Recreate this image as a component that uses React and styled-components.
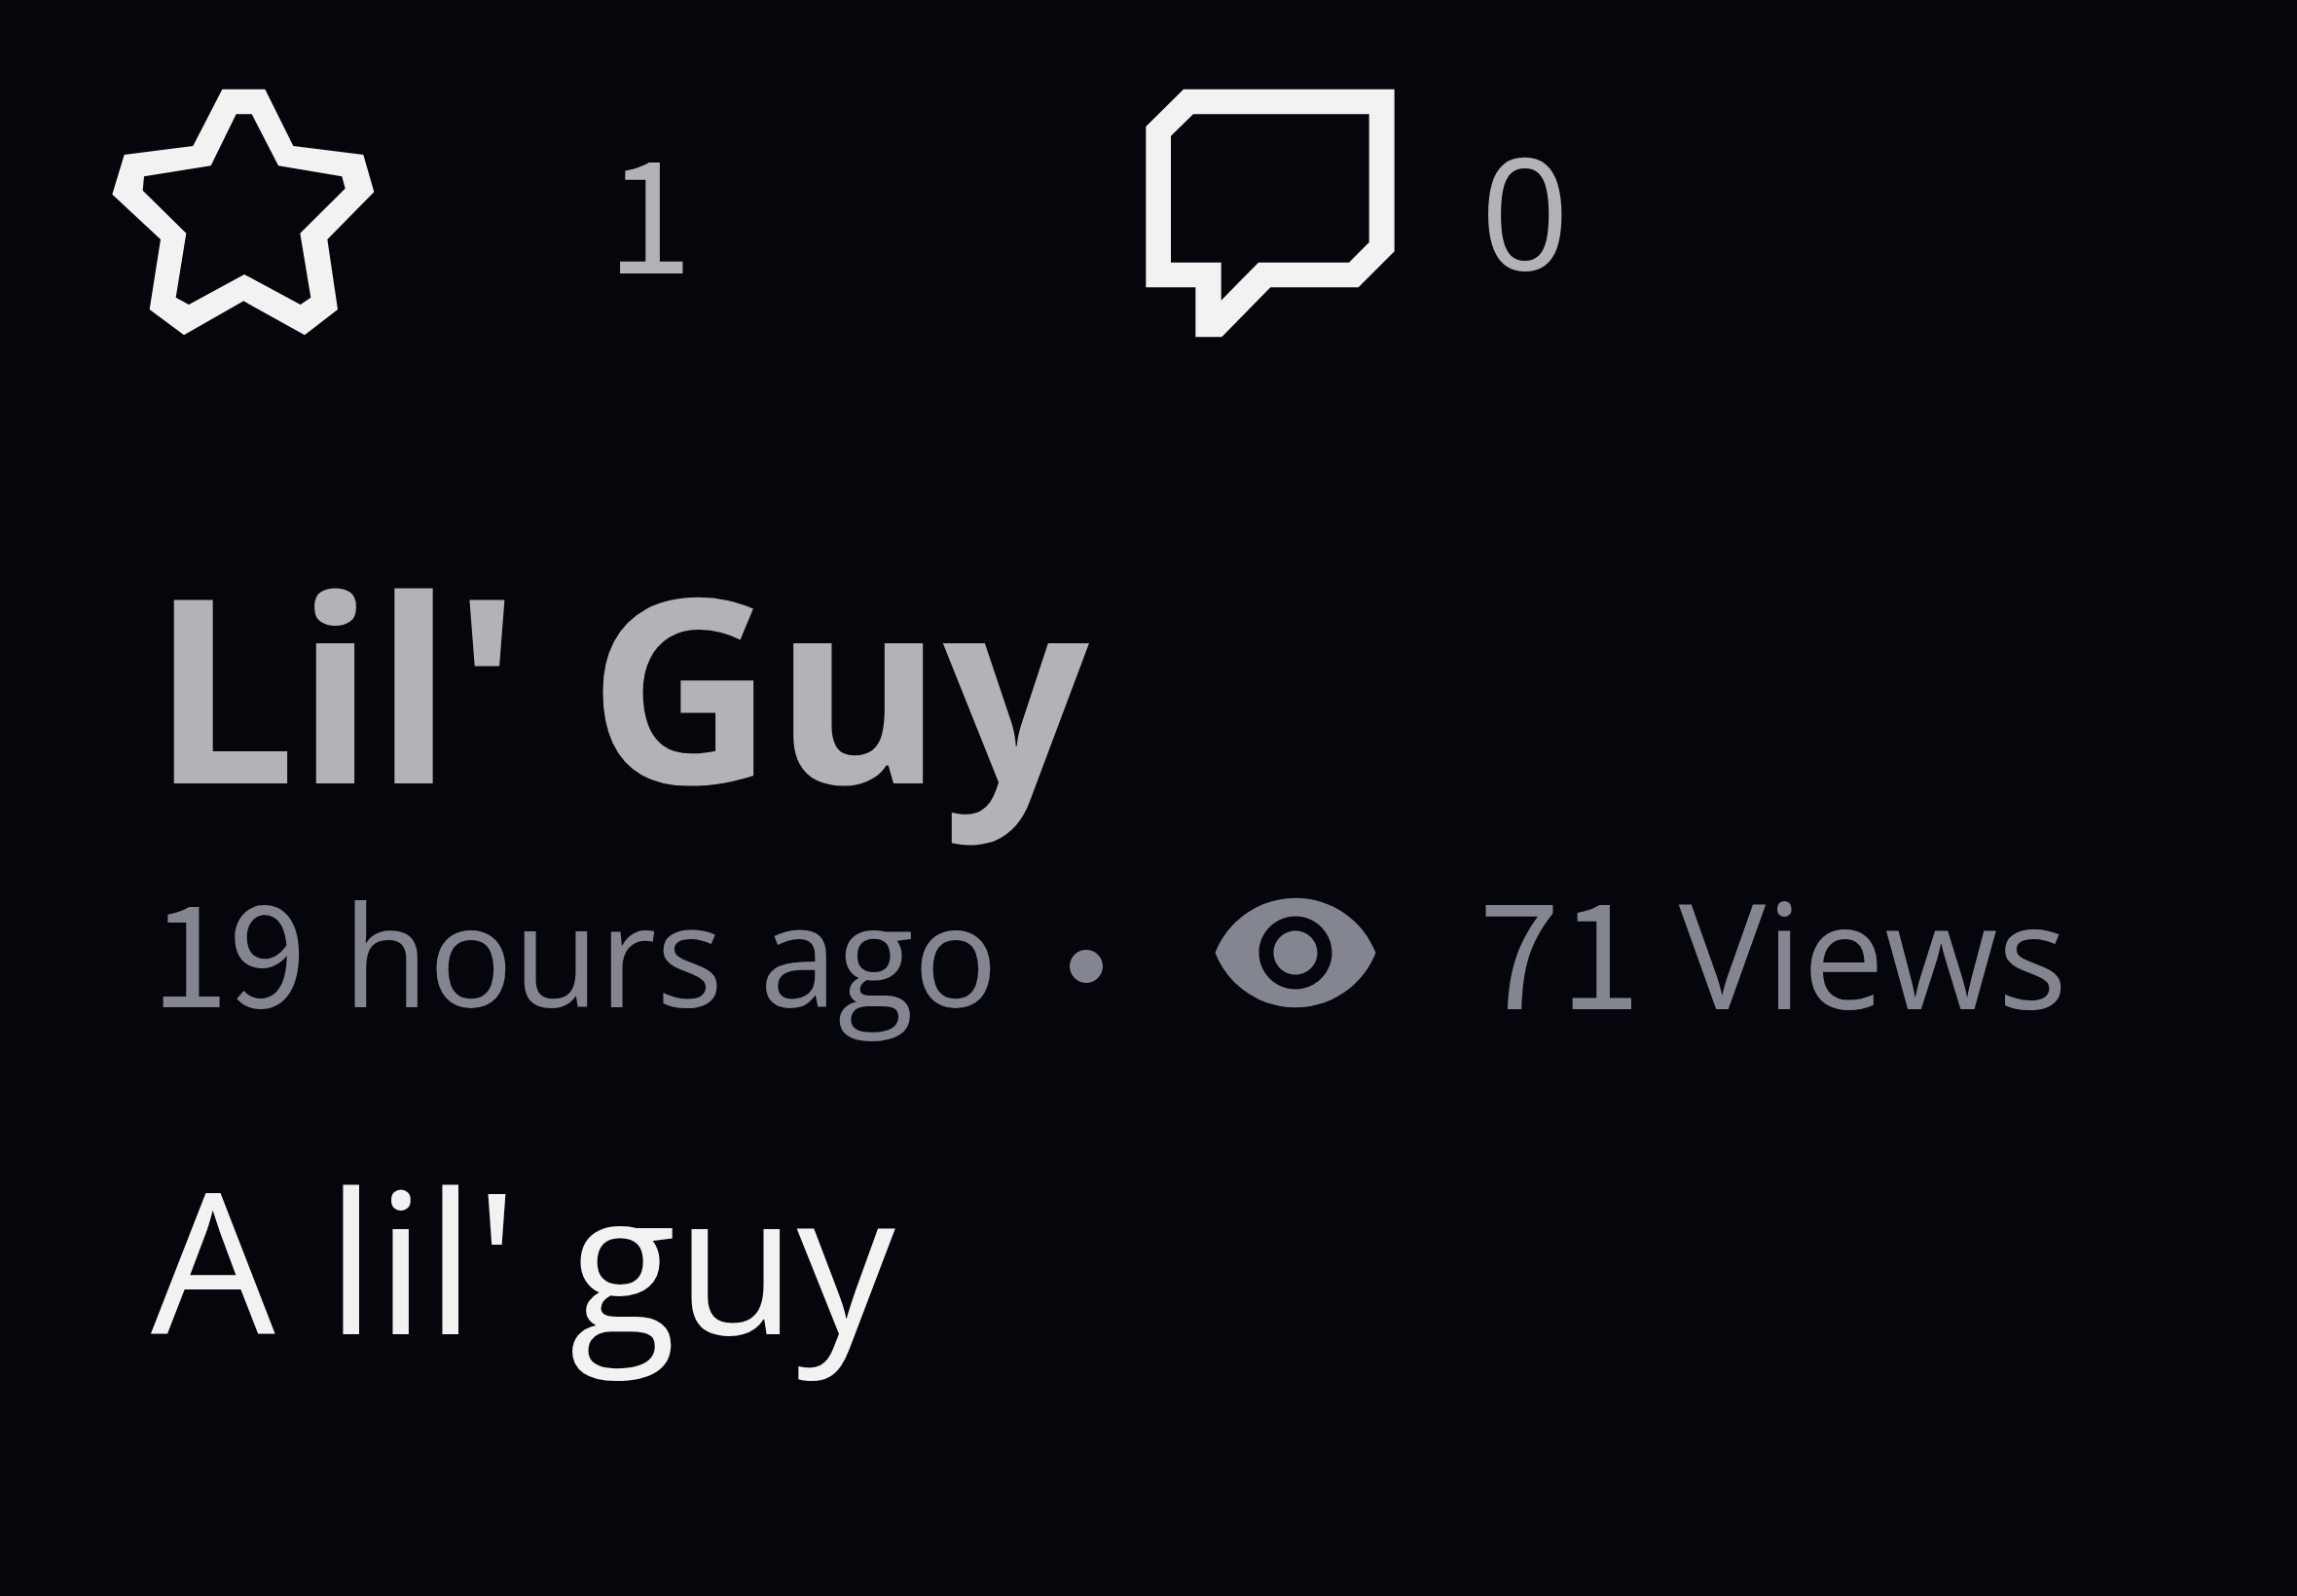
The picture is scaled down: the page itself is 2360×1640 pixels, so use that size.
import React from "react";
import styled, { createGlobalStyle } from "styled-components";
import { MdVisibility } from "react-icons/md";

// my colors: #05060b background, #f2f2f2 bright, #b1b3b8 muted, #838591 faint

const GlobalStyle = createGlobalStyle`
  * {
    box-sizing: border-box;
  }

  body {
    margin: 0;
    background-color: #05060b;
    color: #f2f2f2;
    font-family: "Open Sans", sans-serif;
  }
`;

const Page = styled.main`
  min-height: 100vh;
  padding: 91px 115px;
`;

const Actions = styled.div`
  display: flex;
  align-items: center;
  height: 256px;
`;

const ActionButton = styled.button`
  display: flex;
  align-items: center;
  gap: ${(props) => props.$gap}px;
  width: ${(props) => props.$width}px;
  padding: 0;
  border: 0;
  background: none;
  color: #f2f2f2;
  font-family: inherit;
  font-size: 160px;
  line-height: 224px;
  cursor: pointer;

  svg {
    flex: none;
    fill: currentColor;
  }
`;

const Count = styled.span`
  padding-bottom: ${(props) => props.$lift}px;
  color: #b1b3b8;
`;

// this face has the footed 1
const Digits = styled.span`
  font-family: "Noto Sans CJK SC", sans-serif;
  line-height: 1;
`;

const Details = styled.section`
  padding: 220px 40px 0;
`;

const Title = styled.h1`
  margin: 0;
  color: #b1b3b8;
  font-size: 264px;
  font-weight: 700;
  line-height: 272px;
`;

const Meta = styled.div`
  display: flex;
  align-items: center;
  margin-top: 50px;
  color: #838591;
  font-size: 144px;
  line-height: 176px;
  white-space: nowrap;
`;

const Dot = styled.span`
  width: 34px;
  height: 34px;
  margin: 28px 108px 0 74px;
  border-radius: 50%;
  background-color: currentColor;
`;

const Views = styled.span`
  display: flex;
  align-items: center;
  gap: 98px;
  font-size: 150px;
`;

const Description = styled.p`
  margin: 96px 0 0;
  font-size: 202px;
  line-height: 256px;
`;

const StarIcon = () => (
  <svg width="270" height="256" viewBox="75 64 810 768" aria-hidden="true">
    <path
      fillRule="evenodd"
      d="M415 66H547L634 241L850 268L883 383L739 529L771 745L669 824L481 719L297 824L191 745L225 529L76 390L113 268L325 241ZM458 143L380 302L174 335L170 378L304 510L272 708L312 730L483 637L656 730L688 708L655 510L794 372L784 335L588 302L506 143Z"
    />
  </svg>
);

const CommentIcon = () => (
  <svg width="256" height="256" viewBox="83 64 768 768" aria-hidden="true">
    <path
      fillRule="evenodd"
      d="M84 181L200 66H850V566L739 677H468L318 830H237V677H84ZM161 210V600H316V717L431 600H710L772 538V143H230Z"
    />
  </svg>
);

const App = () => (
  <>
    <GlobalStyle />
    <Page>
      <Actions>
        <ActionButton $gap={238} $width={1062} aria-label="Favourite, 1">
          <StarIcon />
          <Count $lift={0}>
            <Digits>1</Digits>
          </Count>
        </ActionButton>
        <ActionButton $gap={88} $width={460} aria-label="Comment, 0">
          <CommentIcon />
          <Count $lift={8}>0</Count>
        </ActionButton>
      </Actions>
      <Details>
        <Title>Lil' Guy</Title>
        <Meta>
          <span>
            <Digits>19</Digits> hours ago
          </span>
          <Dot />
          <Views>
            <MdVisibility size={180} aria-hidden="true" />
            <span>
              <Digits>71</Digits> Views
            </span>
          </Views>
        </Meta>
        <Description>A lil' guy</Description>
      </Details>
    </Page>
  </>
);

export default App;
